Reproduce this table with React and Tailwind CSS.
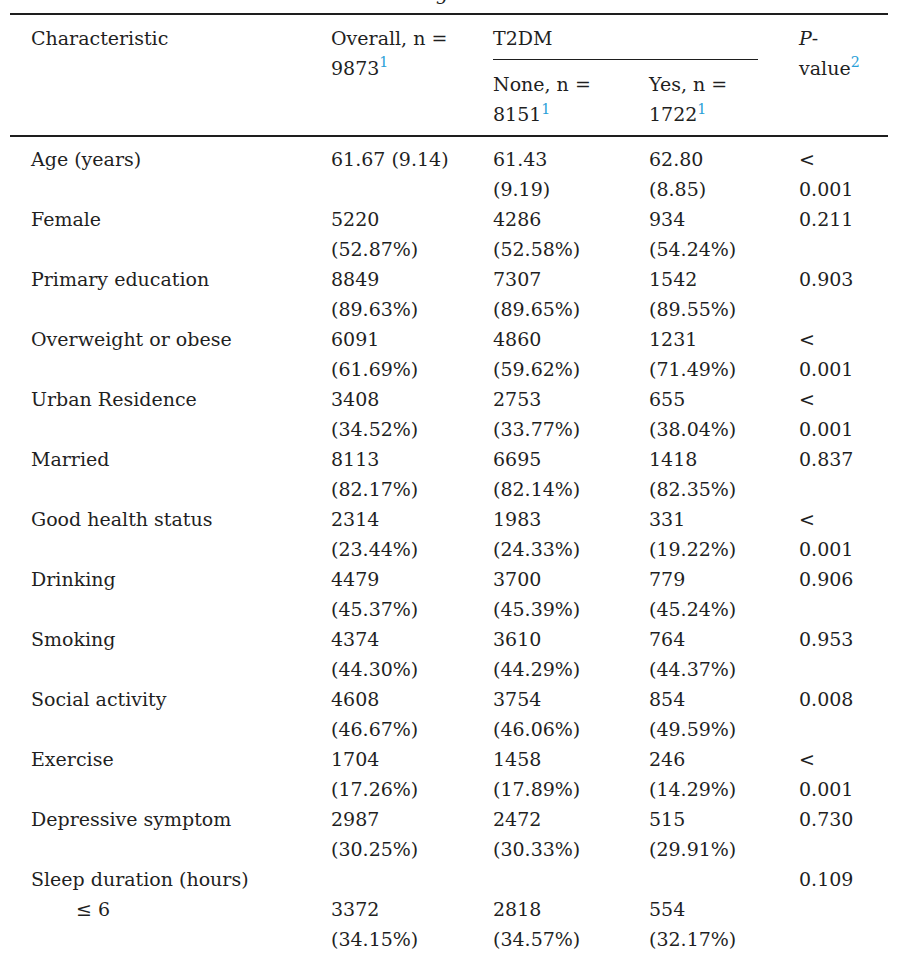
import React from 'react';

const COLS = 'grid grid-cols-[300px_162px_156px_150px_1fr] pl-[21px]';
const RULE = 'h-[1.5px] bg-[#1e1e1e]';

const ROWS = [
  ['Age (years)', ['61.67 (9.14)'], ['61.43', '(9.19)'], ['62.80', '(8.85)'], ['<', '0.001']],
  ['Female', ['5220', '(52.87%)'], ['4286', '(52.58%)'], ['934', '(54.24%)'], ['0.211']],
  ['Primary education', ['8849', '(89.63%)'], ['7307', '(89.65%)'], ['1542', '(89.55%)'], ['0.903']],
  ['Overweight or obese', ['6091', '(61.69%)'], ['4860', '(59.62%)'], ['1231', '(71.49%)'], ['<', '0.001']],
  ['Urban Residence', ['3408', '(34.52%)'], ['2753', '(33.77%)'], ['655', '(38.04%)'], ['<', '0.001']],
  ['Married', ['8113', '(82.17%)'], ['6695', '(82.14%)'], ['1418', '(82.35%)'], ['0.837']],
  ['Good health status', ['2314', '(23.44%)'], ['1983', '(24.33%)'], ['331', '(19.22%)'], ['<', '0.001']],
  ['Drinking', ['4479', '(45.37%)'], ['3700', '(45.39%)'], ['779', '(45.24%)'], ['0.906']],
  ['Smoking', ['4374', '(44.30%)'], ['3610', '(44.29%)'], ['764', '(44.37%)'], ['0.953']],
  ['Social activity', ['4608', '(46.67%)'], ['3754', '(46.06%)'], ['854', '(49.59%)'], ['0.008']],
  ['Exercise', ['1704', '(17.26%)'], ['1458', '(17.89%)'], ['246', '(14.29%)'], ['<', '0.001']],
  ['Depressive symptom', ['2987', '(30.25%)'], ['2472', '(30.33%)'], ['515', '(29.91%)'], ['0.730']],
  ['Sleep duration (hours)', [], [], [], ['0.109']],
  ['≤ 6', ['3372', '(34.15%)'], ['2818', '(34.57%)'], ['554', '(32.17%)'], [], true],
];

function Lines({ lines }) {
  return (
    <div className="flex flex-col">
      {lines.map((l, i) => <span key={i}>{l}</span>)}
    </div>
  );
}

function Note({ n }) {
  return <sup className="text-[#2a9fd8]">{n}</sup>;
}

export default function App() {
  return (
    <div className="min-h-[953px] bg-white text-[19px] leading-[30px] text-[#1f1f1f]" style={{ fontFamily: '"DejaVu Serif", serif' }}>
      {/* caption cut off above the frame */}
      <div className="h-[13px] overflow-hidden">
        <p className="-mt-[22px] pl-[436px] italic">g</p>
      </div>

      <div className="ml-[10px] w-[878px]">
        <div className={RULE} />

        <div className={`${COLS} pt-[8px] pb-[6px]`}>
          <div>Characteristic</div>
          <div className="flex flex-col">
            <span>Overall, n =</span>
            <span>9873<Note n="1" /></span>
          </div>
          <div className="col-span-2 flex flex-col">
            <span>T2DM</span>
            <div className="mt-[6px] h-[1.5px] w-[265px] bg-[#1e1e1e]" />
            <div className="mt-[9px] grid grid-cols-[156px_1fr]">
              <div className="flex flex-col">
                <span>None, n =</span>
                <span>8151<Note n="1" /></span>
              </div>
              <div className="flex flex-col">
                <span>Yes, n =</span>
                <span>1722<Note n="1" /></span>
              </div>
            </div>
          </div>
          <div className="flex flex-col">
            <span><i>P</i>-</span>
            <span>value<Note n="2" /></span>
          </div>
        </div>

        <div className={RULE} />

        <div className="pt-[7px]">
          {ROWS.map(([label, overall, none, yes, p, indent]) => (
            <div key={label} className={COLS}>
              <div className={indent ? 'pl-[45px]' : ''}>{label}</div>
              <Lines lines={overall} />
              <Lines lines={none} />
              <Lines lines={yes} />
              <Lines lines={p} />
            </div>
          ))}
        </div>
      </div>
    </div>
  );
}
